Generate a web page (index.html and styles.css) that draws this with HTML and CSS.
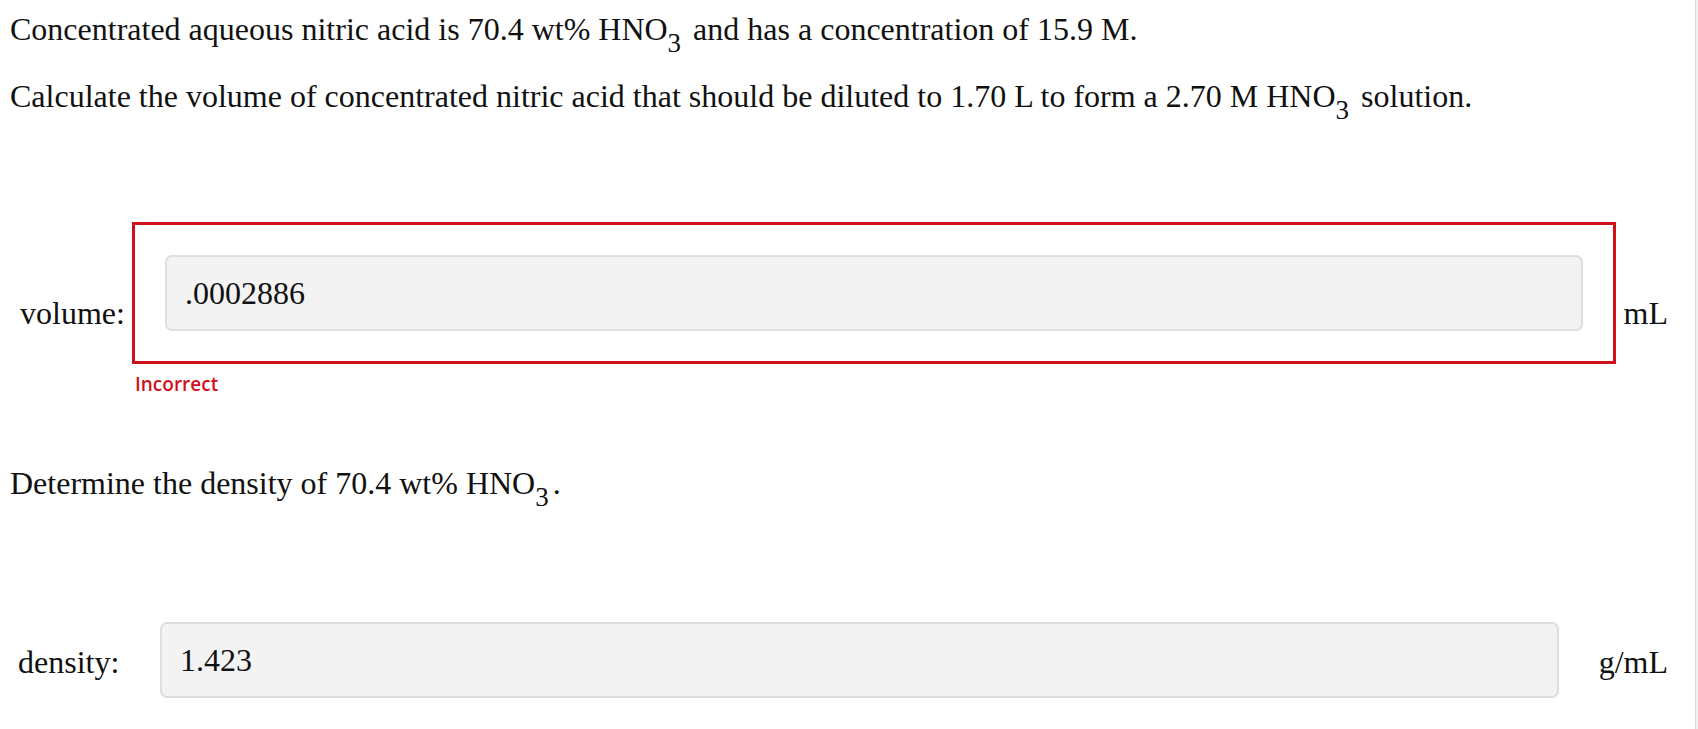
FILE: index.html
```html
<!DOCTYPE html>
<html lang="en">
<head>
<meta charset="utf-8">
<title>Nitric acid dilution</title>
<link rel="stylesheet" href="styles.css">
</head>
<body>
<div class="page">
  <p class="text first">Concentrated aqueous nitric acid is 70.4 wt% HNO<sub class="sub">3</sub> and has a concentration of 15.9 M.</p>
  <p class="text second">Calculate the volume of concentrated nitric acid that should be diluted to 1.70 L to form a 2.70 M HNO<sub class="sub">3</sub> solution.</p>

  <div class="row row-volume">
    <label class="label label-volume" for="volume">volume:</label>
    <div class="answer">
      <div class="answer-box incorrect">
        <input id="volume" class="field" type="text" value=".0002886" readonly>
      </div>
      <div class="feedback">Incorrect</div>
    </div>
    <div class="unit unit-volume">mL</div>
  </div>

  <p class="text third">Determine the density of 70.4 wt% HNO<sub class="sub">3</sub>.</p>

  <div class="row row-density">
    <label class="label label-density" for="density">density:</label>
    <div class="answer">
      <input id="density" class="field" type="text" value="1.423" readonly>
    </div>
    <div class="unit unit-density">g/mL</div>
  </div>
</div>
</body>
</html>
```

FILE: styles.css
```css
html, body {
  margin: 0;
  padding: 0;
  background: #f1f1f1;
  overflow: hidden;
}

.page {
  box-sizing: border-box;
  width: 1696px;
  min-height: 729px;
  padding: 11px 0 0 10px;
  background: #ffffff;
  border-right: 1px solid #dadada;
  font-family: "Liberation Serif", "Times New Roman", Times, serif;
  color: #111111;
}

.text {
  margin: 0;
  font-size: 32px;
  line-height: 36px;
  white-space: nowrap;
}

.second {
  margin-top: 31px;
}

.third {
  margin-top: 61px;
}

.sub {
  font-size: 27px;
  line-height: 0;
  vertical-align: -12px;
  padding-right: 4px;
}

.row {
  display: flex;
  align-items: center;
}

.row-volume {
  margin-top: 108px;
}

.row-density {
  margin-top: 121px;
}

.label {
  box-sizing: border-box;
  flex: none;
  font-size: 32px;
  line-height: 36px;
}

.label-volume {
  width: 122px;
  padding-left: 10px;
}

.label-density {
  width: 150px;
  padding-left: 8px;
  padding-top: 3px;
}

.answer {
  flex: 1;
  min-width: 0;
}

.answer-box {
  padding: 30px;
}

.incorrect {
  border: 3px solid #d0111c;
}

.feedback {
  padding-left: 3px;
  font-family: "Open Sans", "Noto Sans", sans-serif;
  font-weight: 600;
  font-size: 19px;
  line-height: 40px;
  color: #d0111c;
}

.field {
  display: block;
  box-sizing: border-box;
  width: 100%;
  height: 76px;
  margin: 0;
  padding: 0 18px;
  border: 2px solid #dedede;
  border-radius: 7px;
  background: #f3f3f3;
  font-family: "Liberation Serif", "Times New Roman", Times, serif;
  font-size: 32px;
  color: #111111;
  outline: none;
}

.unit {
  box-sizing: border-box;
  flex: none;
  font-size: 32px;
  line-height: 36px;
  text-align: right;
  padding-right: 27px;
}

.unit-volume {
  width: 79px;
}

.unit-density {
  width: 136px;
  padding-top: 3px;
}
```
